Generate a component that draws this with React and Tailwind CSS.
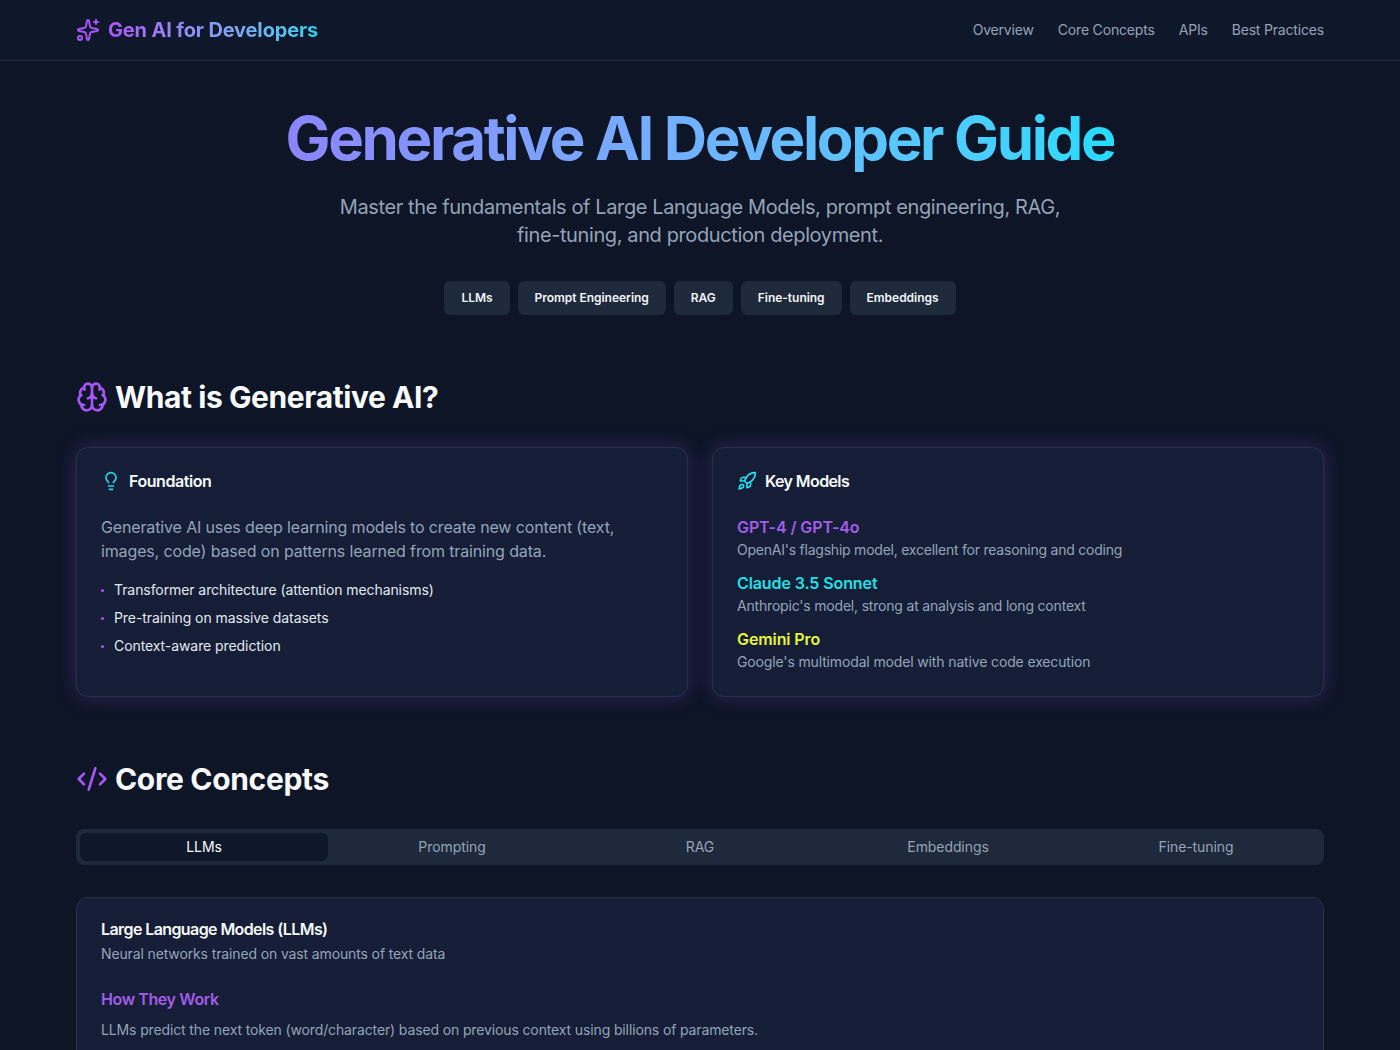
import React from "react";
import { Sparkles, Brain, Lightbulb, Rocket, CodeXml } from "lucide-react";

const cardShadow = "shadow-[0_0_20px_rgba(168,85,247,0.25)]";

function Badge({ children }) {
  return (
    <span className="inline-flex h-[34px] items-center rounded-md bg-[#1e293b] px-[17px] text-xs font-semibold tracking-[-0.03px] text-[#f1f5f9]">
      {children}
    </span>
  );
}

function Model({ color, name, desc, className, track }) {
  return (
    <div className={className}>
      <div className={`text-base leading-6 font-semibold tracking-[-0.1px] ${color}`}>{name}</div>
      <div className={`mt-px text-sm leading-5 text-[#94a3b8] ${track}`}>{desc}</div>
    </div>
  );
}

function Li({ children }) {
  return (
    <li className="flex h-5 items-center gap-[10px] text-sm leading-5 tracking-[-0.08px] text-[#e2e8f0]">
      <span className="h-[3px] w-[3px] rounded-full bg-[#a855f7]" />
      <span>{children}</span>
    </li>
  );
}

export default function App() {
  return (
    <div className="min-h-screen bg-[#0d1526] font-['Inter','Liberation_Sans',sans-serif] text-[#f8fafc]">
      <header className="h-[61px] border-b border-[#263042] bg-[#0f172a]">
        <div className="mx-auto flex h-[60px] max-w-[1280px] items-center justify-between px-4">
          <div className="flex items-center gap-2">
            <Sparkles className="h-6 w-6 text-[#a855f7]" />
            <span className="bg-gradient-to-r from-[#a855f7] to-[#22d3ee] bg-clip-text text-xl font-bold tracking-[-0.15px] text-transparent">
              Gen AI for Developers
            </span>
          </div>
          <nav className="flex gap-6 text-sm tracking-[-0.18px] text-[#94a3b8]">
            <span>Overview</span>
            <span>Core Concepts</span>
            <span>APIs</span>
            <span>Best Practices</span>
          </nav>
        </div>
      </header>

      <main className="mx-auto max-w-[1280px] px-4">
        <section className="flex flex-col items-center pt-[47px] pb-8">
          <h1 className="mb-[21px] bg-gradient-to-r from-[#8b85ff] to-[#22dcff] bg-clip-text pb-1 text-[60px] leading-[60px] font-bold tracking-[-2.36px] text-transparent">
            Generative AI Developer Guide
          </h1>
          <p className="mb-8 max-w-[768px] text-center text-xl leading-7 tracking-[-0.39px] text-[#94a3b8]">
            Master the fundamentals of Large Language Models, prompt engineering, RAG, fine-tuning, and production deployment.
          </p>
          <div className="flex gap-2">
            <Badge>LLMs</Badge>
            <Badge>Prompt Engineering</Badge>
            <Badge>RAG</Badge>
            <Badge>Fine-tuning</Badge>
            <Badge>Embeddings</Badge>
          </div>
        </section>

        <section className="pt-8">
          <h2 className="mb-8 flex items-center gap-[7px] text-3xl leading-9 font-bold tracking-[-0.42px]">
            <Brain className="h-8 w-8 text-[#a855f7]" />
            What is Generative AI?
          </h2>
          <div className="grid grid-cols-2 gap-6">
            <div className={`h-[250px] rounded-xl border border-[#2a3048] bg-[#151e36] px-6 pt-[23px] ${cardShadow}`}>
              <div className="flex h-5 items-center gap-2 text-base font-semibold tracking-[-0.45px] text-[#f8fafc]">
                <Lightbulb className="h-5 w-5 text-[#22d3ee]" />
                Foundation
              </div>
              <p className="mt-6 text-base leading-6 tracking-[-0.14px] text-[#94a3b8]">
                Generative AI uses deep learning models to create new content (text, images, code) based on patterns learned from training data.
              </p>
              <ul className="mt-[17px] flex flex-col gap-2">
                <Li>Transformer architecture (attention mechanisms)</Li>
                <Li>Pre-training on massive datasets</Li>
                <Li>Context-aware prediction</Li>
              </ul>
            </div>
            <div className={`h-[250px] rounded-xl border border-[#2a3048] bg-[#151e36] px-6 pt-[23px] ${cardShadow}`}>
              <div className="flex h-5 items-center gap-2 text-base font-semibold tracking-[-0.6px] text-[#f8fafc]">
                <Rocket className="h-5 w-5 text-[#22e0ee]" />
                Key Models
              </div>
              <Model className="mt-6" track="tracking-[-0.23px]" color="text-[#a25ce8]" name="GPT-4 / GPT-4o" desc="OpenAI's flagship model, excellent for reasoning and coding" />
              <Model className="mt-[11px]" track="tracking-[-0.19px]" color="text-[#22e0e8]" name="Claude 3.5 Sonnet" desc="Anthropic's model, strong at analysis and long context" />
              <Model className="mt-[11px]" track="tracking-[-0.14px]" color="text-[#e8f53a]" name="Gemini Pro" desc="Google's multimodal model with native code execution" />
            </div>
          </div>
        </section>

        <section className="pt-16">
          <h2 className="mb-8 flex items-center gap-[7px] text-3xl leading-9 font-bold tracking-[-0.34px]">
            <CodeXml className="h-8 w-8 text-[#a855f7]" />
            Core Concepts
          </h2>
          <div className="grid h-9 grid-cols-5 items-center rounded-lg bg-[#1e293b] p-1 text-sm tracking-[-0.08px] text-[#94a3b8]">
            <div className="flex h-7 items-center justify-center rounded-md bg-[#0f172a] text-[#f8fafc]">LLMs</div>
            <div className="text-center">Prompting</div>
            <div className="text-center">RAG</div>
            <div className="text-center">Embeddings</div>
            <div className="text-center">Fine-tuning</div>
          </div>
          <div className="mt-8 rounded-xl border border-[#2a3048] bg-[#151e36] px-6 pt-[23px] pb-6">
            <div className="text-base leading-4 font-semibold tracking-[-0.59px] text-[#f8fafc]">Large Language Models (LLMs)</div>
            <div className="mt-[7px] text-sm leading-5 tracking-[-0.13px] text-[#94a3b8]">Neural networks trained on vast amounts of text data</div>
            <div className="mt-[23px] text-base leading-6 font-semibold tracking-[-0.4px] text-[#a25ce8]">How They Work</div>
            <p className="mt-[9px] text-sm leading-5 tracking-[-0.13px] text-[#94a3b8]">LLMs predict the next token (word/character) based on previous context using billions of parameters.</p>
          </div>
        </section>
      </main>
    </div>
  );
}
